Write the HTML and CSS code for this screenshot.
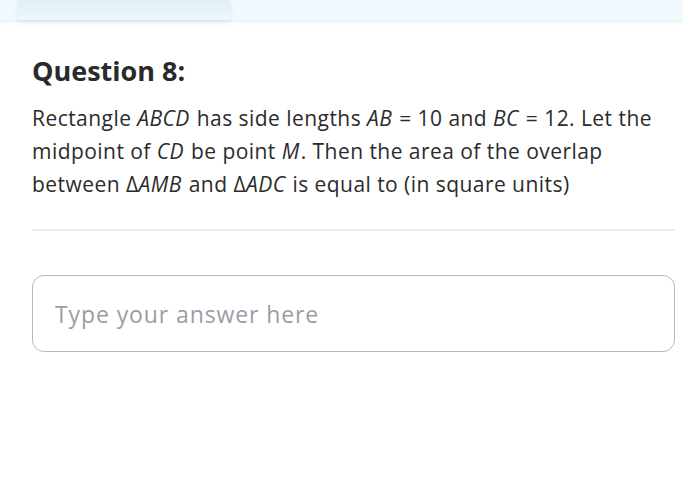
FILE: index.html
```html
<!DOCTYPE html>
<html>
<head>
<meta charset="utf-8">
<link rel="stylesheet" href="styles.css">
</head>
<body>
<header class="topbar">
  <div class="tab"></div>
</header>
<main class="content">
  <h1 class="title">Question 8:</h1>
  <p class="question">Rectangle <i>ABCD</i> has side lengths <i>AB</i> = 10 and <i>BC</i> = 12. Let the midpoint of <i>CD</i> be point <i>M</i>. Then the area of the overlap between Δ<i>AMB</i> and Δ<i>ADC</i> is equal to (in square units)</p>
  <hr class="divider">
  <div class="answer">
    <input class="answer-input" type="text" placeholder="Type your answer here">
  </div>
</main>
</body>
</html>
```
FILE: styles.css
```css
html, body {
  margin: 0;
  padding: 0;
  background: #ffffff;
}
body {
  font-family: "Open Sans", "Lato", sans-serif;
  color: #2b2b2b;
}
.topbar {
  height: 20px;
  background: #eff9fe;
  border-bottom: 1px solid #e6f1f7;
  padding-left: 18px;
  box-shadow: 0 2px 3px rgba(200, 220, 230, 0.25);
}
.tab {
  width: 212px;
  height: 20px;
  background: linear-gradient(#e3eef6, #edf7fd);
  box-shadow: 0 2px 4px rgba(180, 200, 215, 0.35);
}
.content {
  padding: 0 8px 0 32px;
}
.title {
  margin: 33px 0 0 0;
  font-size: 27px;
  font-weight: 700;
  line-height: 34px;
  color: #2a2a2a;
}
.question {
  margin: 14px 0 0 0;
  font-size: 21px;
  letter-spacing: 0.45px;
  line-height: 33px;
  color: #2b2b2b;
  max-width: 640px;
}
.question i {
  font-style: italic;
  padding-right: 1px;
}
.divider {
  margin: 28px 0 0 0;
  border: 0;
  height: 2px;
  background: #eeeeee;
}
.answer {
  margin-top: 44px;
}
.answer-input {
  box-sizing: border-box;
  width: 100%;
  height: 77px;
  border: 1px solid #b8b8bc;
  border-radius: 12px;
  padding: 0 22px;
  font-family: "Open Sans", sans-serif;
  font-size: 23px;
  letter-spacing: 0.9px;
  color: #2b2b2b;
  outline: none;
  background: #fff;
}
.answer-input::placeholder {
  color: #9c9ca6;
}
```
